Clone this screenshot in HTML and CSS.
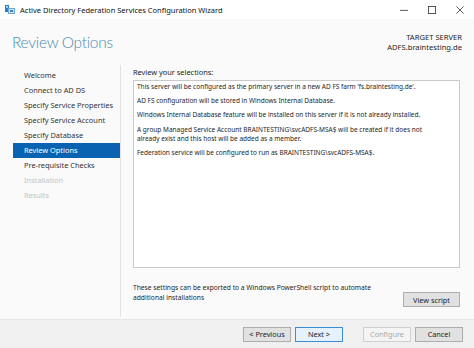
FILE: index.html
```html
<!DOCTYPE html>
<html lang="en">
<head>
  <meta charset="UTF-8" />
  <title>Active Directory Federation Services Configuration Wizard</title>
  <link rel="stylesheet" href="styles.css">
</head>
<body>
  <div class="window">
    <div class="titlebar">
      <svg class="app-icon" width="10" height="9" viewBox="0 0 10 9">
        <rect x="0" y="0" width="4" height="7" fill="#2f7fc8"/>
        <rect x="1" y="1" width="2" height="2" fill="#9fd0f5"/>
        <rect x="3" y="3" width="7" height="6" fill="#6aa7dc"/>
        <rect x="4" y="4" width="5" height="4" fill="#cfe6f8"/>
        <rect x="5" y="5" width="3" height="2" fill="#3a86c8"/>
      </svg>
      <span class="title">Active Directory Federation Services Configuration Wizard</span>
      <div class="controls">
        <span class="ctl">
          <svg width="10" height="10" viewBox="0 0 10 10"><path d="M0 5.5h10" stroke="#333" stroke-width="1"/></svg>
        </span>
        <span class="ctl">
          <svg width="10" height="10" viewBox="0 0 10 10"><rect x="0.5" y="0.5" width="9" height="9" fill="none" stroke="#333" stroke-width="1"/></svg>
        </span>
        <span class="ctl">
          <svg width="10" height="10" viewBox="0 0 10 10"><path d="M0.5 0.5l9 9M9.5 0.5l-9 9" stroke="#333" stroke-width="1"/></svg>
        </span>
      </div>
    </div>

    <div class="header">
      <h1>Review Options</h1>
      <div class="target">
        <div>TARGET SERVER</div>
        <div>ADFS.braintesting.de</div>
      </div>
    </div>

    <div class="main">
      <ul class="nav">
        <li>Welcome</li>
        <li>Connect to AD DS</li>
        <li>Specify Service Properties</li>
        <li>Specify Service Account</li>
        <li>Specify Database</li>
        <li class="active">Review Options</li>
        <li>Pre-requisite Checks</li>
        <li class="disabled">Installation</li>
        <li class="disabled">Results</li>
      </ul>

      <div class="content">
        <div class="label">Review your selections:</div>
        <div class="summary">
          <p>This server will be configured as the primary server in a new AD FS farm 'fs.braintesting.de'.</p>
          <p>AD FS configuration will be stored in Windows Internal Database.</p>
          <p>Windows Internal Database feature will be installed on this server if it is not already installed.</p>
          <p>A group Managed Service Account BRAINTESTING\svcADFS-MSA$ will be created if it does not already exist and this host will be added as a member.</p>
          <p>Federation service will be configured to run as BRAINTESTING\svcADFS-MSA$.</p>
        </div>
        <div class="export">
          <div class="export-text">These settings can be exported to a Windows PowerShell script to automate additional installations</div>
          <button class="btn">View script</button>
        </div>
      </div>
    </div>

    <div class="footer">
      <button class="btn">&lt; Previous</button>
      <button class="btn primary">Next &gt;</button>
      <button class="btn off">Configure</button>
      <button class="btn">Cancel</button>
    </div>
  </div>
</body>
</html>
```

FILE: styles.css
```css
body {
  margin: 0;
  font-family: "Noto Sans", "Open Sans", sans-serif;
  font-size: 7.4px;
  color: #1e1e1e;
  background: #fafafa;
}

.window {
  width: 474px;
  height: 348px;
  display: flex;
  flex-direction: column;
  overflow: hidden;
}

.titlebar {
  height: 19px;
  background: #fff;
  display: flex;
  align-items: center;
  padding-left: 5px;
  font-size: 7.5px;
  color: #111;
}

.app-icon {
  margin-right: 5px;
}

.controls {
  margin-left: auto;
  display: flex;
}

.ctl {
  width: 28px;
  height: 19px;
  display: flex;
  align-items: center;
  justify-content: center;
}

.ctl svg {
  width: 8px;
  height: 8px;
}

.header {
  height: 46px;
  display: flex;
  justify-content: space-between;
  align-items: flex-start;
  padding: 0 12px;
}

.header h1 {
  margin: 14px 0 0 0;
  font-family: Lato, "Open Sans", sans-serif;
  font-weight: 300;
  font-size: 15.5px;
  letter-spacing: -0.3px;
  color: #4d8ab0;
}

.target {
  margin-top: 13px;
  text-align: right;
  line-height: 10px;
  font-size: 7.6px;
}

.main {
  flex: 1;
  display: flex;
}

.nav {
  list-style: none;
  margin: 0 0 2px 0;
  padding: 3px 0 0 13px;
  width: 107px;
  border-right: 1px solid #e2e2e2;
}

.nav li {
  height: 15px;
  line-height: 15px;
  padding-left: 11px;
  color: #333;
  white-space: nowrap;
}

.nav li.active {
  background: #0a63b0;
  color: #fff;
}

.nav li.disabled {
  color: #c4c4c4;
}

.content {
  flex: 1;
  padding: 2px 14px 0 12px;
  display: flex;
  flex-direction: column;
}

.label {
  height: 13px;
  line-height: 10px;
}

.summary {
  height: 184px;
  background: #fff;
  border: 1px solid #c9c9c9;
  padding: 1px 20px 1px 3px;
  font-size: 6.5px;
  line-height: 9.5px;
}

.summary p {
  margin: 0 0 4.7px 0;
}

.export {
  display: flex;
  align-items: flex-start;
  margin-top: 15px;
}

.export-text {
  width: 255px;
  font-size: 6.7px;
  line-height: 9.5px;
}

.btn {
  font-family: inherit;
  font-size: 7.3px;
  color: #222;
  background: #e1e1e1;
  border: 1px solid #adadad;
  height: 15px;
  width: 48px;
  padding: 0;
}

.export .btn {
  margin: 9px 0 0 auto;
  width: 57px;
}

.footer {
  height: 28px;
  background: #f0f0f0;
  border-top: 1px solid #e6e6e6;
  display: flex;
  align-items: center;
  padding-left: 243px;
  gap: 4px;
}

.btn.primary {
  border-color: #3c8fd6;
  background: #e5f1fb;
}

.btn.off {
  margin-left: 16px;
  color: #a8a8a8;
  background: #f4f4f4;
  border-color: #cfcfcf;
}
```
